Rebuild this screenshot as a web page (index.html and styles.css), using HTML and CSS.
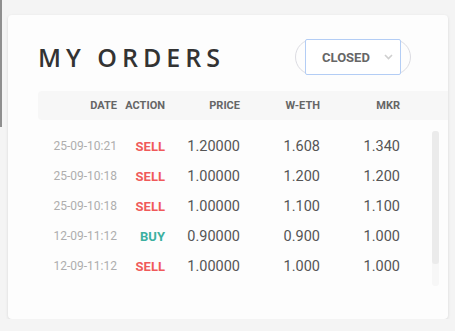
FILE: index.html
```html
<!doctype html>
<html lang="en">
  <head>
    <meta charset="utf-8"/>
    <title>My orders</title>
    <link rel="stylesheet" href="styles.css">
  </head>
  <body>
    <div class="edge"></div>

    <section class="orders">
      <header class="orders__head">
        <h1 class="orders__title">My orders</h1>
        <div class="filter">
          <div class="filter__select">
            <span class="filter__text">CLOSED</span>
            <svg class="filter__arrow" width="9" height="6" viewBox="0 0 9 6">
              <polyline points="1,1 4.5,4.5 8,1" fill="none" stroke="#cfcfcf" stroke-width="1.6"/>
            </svg>
          </div>
        </div>
      </header>

      <div class="row row_head">
        <span>Date</span>
        <span>Action</span>
        <span>Price</span>
        <span>W-ETH</span>
        <span>MKR</span>
      </div>

      <div class="body">
        <div class="list">
          <div class="row">
            <span class="row__date">25-09-10:21</span>
            <span class="row__action row__action_sell">SELL</span>
            <span class="row__num">1.20000</span>
            <span class="row__num">1.608</span>
            <span class="row__num">1.340</span>
          </div>
          <div class="row">
            <span class="row__date">25-09-10:18</span>
            <span class="row__action row__action_sell">SELL</span>
            <span class="row__num">1.00000</span>
            <span class="row__num">1.200</span>
            <span class="row__num">1.200</span>
          </div>
          <div class="row">
            <span class="row__date">25-09-10:18</span>
            <span class="row__action row__action_sell">SELL</span>
            <span class="row__num">1.00000</span>
            <span class="row__num">1.100</span>
            <span class="row__num">1.100</span>
          </div>
          <div class="row">
            <span class="row__date">12-09-11:12</span>
            <span class="row__action row__action_buy">BUY</span>
            <span class="row__num">0.90000</span>
            <span class="row__num">0.900</span>
            <span class="row__num">1.000</span>
          </div>
          <div class="row">
            <span class="row__date">12-09-11:12</span>
            <span class="row__action row__action_sell">SELL</span>
            <span class="row__num">1.00000</span>
            <span class="row__num">1.000</span>
            <span class="row__num">1.000</span>
          </div>
        </div>
        <div class="scrollbar">
          <div class="scrollbar__thumb"></div>
        </div>
      </div>
    </section>
  </body>
</html>
```

FILE: styles.css
```css
body {
  margin: 0;
  padding-top: 15px;
  display: flex;
  align-items: flex-start;
  background-color: #f4f4f4;
  font-family: Roboto, "Liberation Sans", sans-serif;
}
.edge {
  width: 2px;
  height: 127px;
  margin-top: -15px;
  background-color: #8f8f8f;
}
.orders {
  box-sizing: border-box;
  width: 440px;
  height: 304px;
  margin-left: 6px;
  padding: 24px 0 0 30px;
  background-color: #fdfdfd;
  border-radius: 4px;
  box-shadow: 0 1px 3px rgba(0, 0, 0, 0.12);
}
.orders__head {
  display: flex;
  justify-content: space-between;
  align-items: center;
  height: 36px;
  padding-right: 37px;
}
.orders__title {
  margin: 0;
  font-family: "Open Sans", sans-serif;
  font-size: 25px;
  font-weight: 600;
  letter-spacing: 5px;
  text-transform: uppercase;
  color: #333;
}
.filter {
  box-sizing: border-box;
  width: 116px;
  height: 36px;
  padding-left: 9px;
  border: 1px solid #dcdce2;
  border-radius: 18px;
}
.filter__select {
  box-sizing: border-box;
  display: flex;
  align-items: center;
  width: 96px;
  height: 36px;
  margin-top: -1px;
  padding-left: 16px;
  background-color: #fff;
  border: 1px solid #b3cdf5;
  border-radius: 2px;
}
.filter__text {
  font-size: 13px;
  font-weight: 700;
  color: #666;
}
.filter__arrow {
  margin-left: 14px;
}
.row {
  display: grid;
  grid-template-columns: 79px 48px 75px 80px 80px;
  align-items: center;
  height: 30px;
  text-align: right;
}
.row_head {
  height: 29px;
  margin-top: 16px;
  background-color: #f7f7f7;
  border-radius: 4px 0 0 4px;
  font-size: 11px;
  font-weight: 700;
  text-transform: uppercase;
  color: #666;
}
.body {
  display: flex;
  height: 155px;
  margin-top: 11px;
}
.list {
  width: 394px;
}
.scrollbar {
  width: 7px;
  background-color: #f7f7f7;
  border-radius: 3px;
}
.scrollbar__thumb {
  height: 133px;
  background-color: #ebebeb;
  border-radius: 3px;
}
.row__date {
  font-size: 12px;
  color: #aeaeae;
}
.row__action {
  font-size: 13px;
  font-weight: 700;
}
.row__action_sell {
  color: #f05a5a;
}
.row__action_buy {
  color: #3bb0a0;
}
.row__num {
  font-size: 14.5px;
  color: #555;
}
```
